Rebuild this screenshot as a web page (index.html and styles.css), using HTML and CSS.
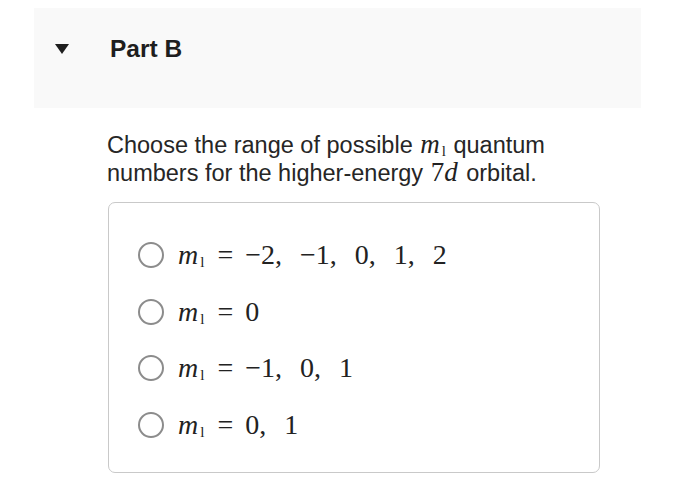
FILE: index.html
```html
<!DOCTYPE html>
<html>
<head>
<meta charset="utf-8">
<link rel="stylesheet" href="styles.css">
</head>
<body>
<div class="page">
  <div class="part-header">
    <span class="caret"></span>
    <span class="part-title">Part B</span>
  </div>
  <div class="part-body">
    <p class="question">Choose the range of possible <span class="math"><i>m</i><sub>l</sub></span> quantum numbers for the higher-energy <span class="math">7<i>d</i></span> orbital.</p>
    <div class="choices">
      <label class="choice"><span class="radio"></span><span class="math eq"><i>m</i><sub>l</sub><span class="op">=</span><span class="term">−2,</span><span class="term">−1,</span><span class="term">0,</span><span class="term">1,</span><span class="term">2</span></span></label>
      <label class="choice"><span class="radio"></span><span class="math eq"><i>m</i><sub>l</sub><span class="op">=</span><span class="term">0</span></span></label>
      <label class="choice"><span class="radio"></span><span class="math eq"><i>m</i><sub>l</sub><span class="op">=</span><span class="term">−1,</span><span class="term">0,</span><span class="term">1</span></span></label>
      <label class="choice"><span class="radio"></span><span class="math eq"><i>m</i><sub>l</sub><span class="op">=</span><span class="term">0,</span><span class="term">1</span></span></label>
    </div>
  </div>
</div>
</body>
</html>
```
FILE: styles.css
```css
html, body {
  margin: 0;
  padding: 0;
  background: #ffffff;
}
.page {
  padding-top: 8px;
  font-family: "Liberation Sans", Arial, sans-serif;
  color: #222;
}
.part-header {
  margin-left: 34px;
  width: 607px;
  height: 100px;
  background: #f9f9f9;
  display: flex;
  align-items: center;
  box-sizing: border-box;
  padding-left: 21px;
  padding-bottom: 18px;
}
.caret {
  width: 0;
  height: 0;
  border-left: 7.5px solid transparent;
  border-right: 7.5px solid transparent;
  border-top: 10px solid #1e1e1e;
  margin-right: 41px;
}
.part-title {
  font-size: 24.5px;
  font-weight: bold;
  color: #1e1e1e;
}
.part-body {
  margin-left: 107px;
}
.question {
  margin: 23px 0 0 0;
  font-size: 23.5px;
  line-height: 28px;
  color: #262626;
  width: 452px;
}
.question .math {
  line-height: 0;
  margin: 0 1px;
}
.math {
  font-family: "Liberation Serif", "Times New Roman", serif;
  font-size: 27px;
  color: #222;
}
.math i {
  font-style: italic;
  letter-spacing: 1px;
}
.math sub {
  font-size: 15px;
  line-height: 0;
  vertical-align: -3px;
  margin-left: 1px;
}
.choices {
  margin-top: 15px;
  margin-left: 1px;
  width: 492px;
  height: 271px;
  box-sizing: border-box;
  border: 1.5px solid #c9c9c9;
  border-radius: 7px;
  padding-top: 37px;
  display: flex;
  flex-direction: column;
  gap: 26.5px;
}
.choice {
  display: flex;
  align-items: center;
  height: 30px;
  padding-left: 29px;
}
.radio {
  width: 26px;
  height: 26px;
  box-sizing: border-box;
  border: 2.5px solid #8c8c8c;
  border-radius: 50%;
  margin-right: 14px;
  flex: none;
}
.eq {
  font-size: 28px;
  white-space: nowrap;
}
.eq .op {
  margin: 0 12px 0 13px;
}
.eq .term {
  margin-right: 18px;
}
.eq .term:last-child {
  margin-right: 0;
}
```
